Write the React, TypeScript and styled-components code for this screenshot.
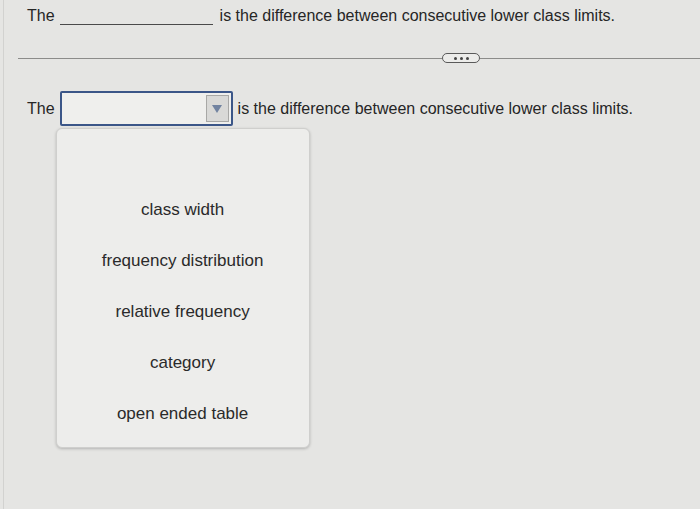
import styled, { createGlobalStyle } from 'styled-components';

const GlobalStyle = createGlobalStyle`
  html, body {
    margin: 0;
    padding: 0;
    background: #e5e5e3;
  }
  body {
    font-family: 'Liberation Sans', Arial, sans-serif;
    color: #262626;
  }
`;

const Page = styled.div`
  position: relative;
  width: 700px;
  height: 509px;
  overflow: hidden;
  box-sizing: border-box;
  border-left: 1px solid #d2d2d0;
  margin-left: 3px;
  padding-top: 6px;
`;

const Sentence = styled.div<{ $top: number }>`
  display: flex;
  align-items: center;
  margin-top: ${(p) => p.$top}px;
  padding-left: 23px;
  font-size: 16px;
  line-height: 20px;
`;

const Blank = styled.span`
  display: inline-block;
  width: 153px;
  height: 18px;
  margin: 0 7px 0 5px;
  border-bottom: 1px solid #4a4a4a;
  align-self: flex-start;
`;

const Divider = styled.div`
  display: flex;
  align-items: center;
  margin: 27px 0 0 14px;
`;

const Rule = styled.div<{ $width?: number }>`
  height: 1px;
  background: #8c8c8a;
  flex: ${(p) => (p.$width ? `0 0 ${p.$width}px` : '1')};
`;

const Pill = styled.div`
  display: flex;
  align-items: center;
  justify-content: center;
  gap: 3px;
  width: 36px;
  height: 8px;
  border: 1.5px solid #5a5a5a;
  border-radius: 6px;
  background: #ececea;
`;

const Dot = styled.span`
  width: 3px;
  height: 3px;
  border-radius: 50%;
  background: #444;
`;

const SelectWrap = styled.div`
  position: relative;
  margin: 0 5px 0 5px;
`;

const SelectBox = styled.div`
  display: flex;
  justify-content: flex-end;
  align-items: center;
  box-sizing: border-box;
  width: 173px;
  height: 35px;
  padding-right: 2px;
  border: 2px solid #3b5688;
  border-radius: 2px;
  background: #efefed;
`;

const ArrowButton = styled.div`
  display: flex;
  align-items: center;
  justify-content: center;
  box-sizing: border-box;
  width: 23px;
  height: 27px;
  border: 1px solid #a8a8a6;
  background: #d9d9d7;
`;

const Menu = styled.ul`
  position: absolute;
  top: 37px;
  left: -4px;
  width: 254px;
  height: 320px;
  box-sizing: border-box;
  margin: 0;
  padding: 55px 0 0;
  list-style: none;
  background: #ededeb;
  border: 1px solid #cfcfcd;
  border-radius: 6px;
  box-shadow: 0 1px 3px rgba(0, 0, 0, 0.22);
`;

const Option = styled.li`
  height: 51px;
  line-height: 51px;
  text-align: center;
  font-size: 17px;
  color: #2a2a2a;
`;

const options = [
  'class width',
  'frequency distribution',
  'relative frequency',
  'category',
  'open ended table',
];

export default function App() {
  return (
    <>
      <GlobalStyle />
      <Page>
        <Sentence $top={0}>
          The
          <Blank />
          is the difference between consecutive lower class limits.
        </Sentence>

        <Divider>
          <Rule $width={424} />
          <Pill>
            <Dot />
            <Dot />
            <Dot />
          </Pill>
          <Rule />
        </Divider>

        <Sentence $top={28}>
          The
          <SelectWrap>
            <SelectBox>
              <ArrowButton>
                <svg width="12" height="10" viewBox="0 0 12 10">
                  <path d="M1 1 L11 1 L6 9 Z" fill="#7183a0" />
                </svg>
              </ArrowButton>
            </SelectBox>
            <Menu>
              {options.map((o) => (
                <Option key={o}>{o}</Option>
              ))}
            </Menu>
          </SelectWrap>
          is the difference between consecutive lower class limits.
        </Sentence>
      </Page>
    </>
  );
}
